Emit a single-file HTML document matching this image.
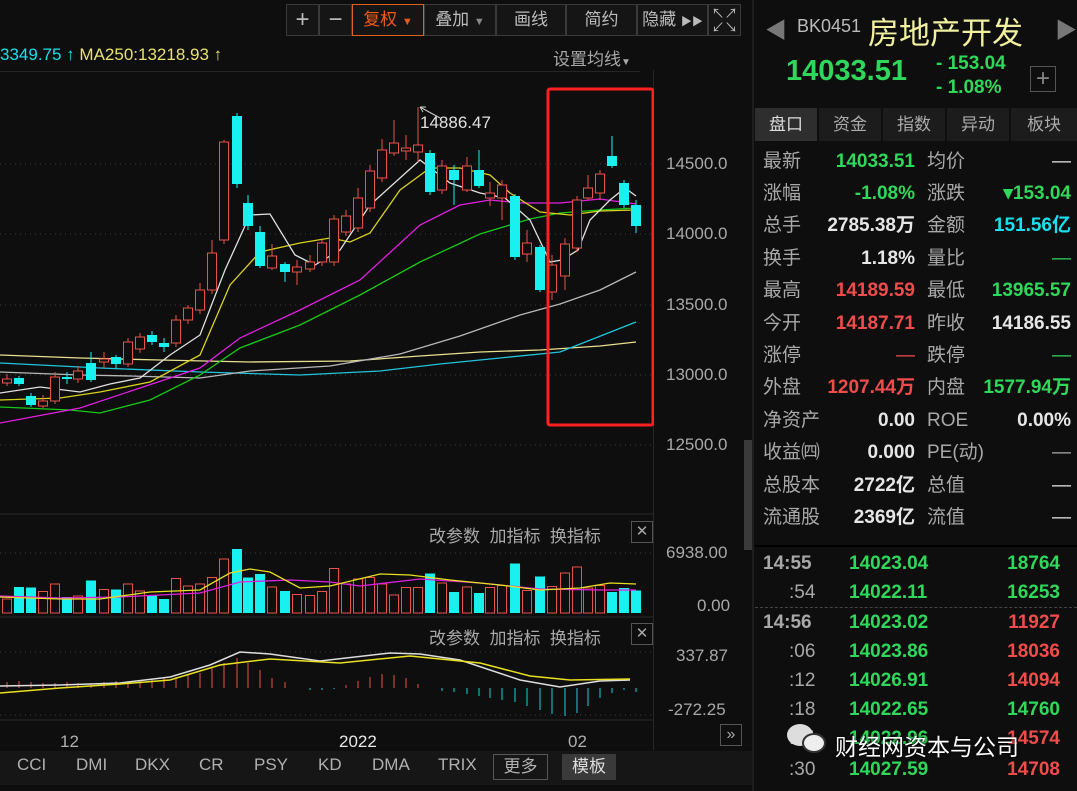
<!DOCTYPE html>
<html><head><meta charset="utf-8"><style>
*{margin:0;padding:0;box-sizing:border-box}
body{width:1077px;height:791px;background:#0e0e0e;overflow:hidden;position:relative;font-family:"Liberation Sans","Noto Sans CJK SC",sans-serif;color:#c8c8c8}
.a{position:absolute;white-space:nowrap}
.btn{position:absolute;top:4px;height:32px;border:1px solid #3a3a3a;background:#151515;color:#bbb;font-size:17px;line-height:30px;text-align:center}
.g{color:#2fd85a}.r{color:#f14c4c}.c{color:#19e0ee}.w{color:#e6e6e6}.l{color:#a8a8a8}
.row{position:absolute;left:763px;width:308px;height:30px;font-size:19px;line-height:30px}
.row span{position:absolute}
.tab{position:absolute;top:108px;height:33px;background:#1c1c1c;color:#aaa;font-size:17px;line-height:33px;text-align:center}
.t{position:absolute;left:763px;width:297px;font-size:19px;font-weight:bold;line-height:28px}
.t span{position:absolute}
.bt{position:absolute;top:755px;font-size:17px;color:#b0b0b0}
</style></head><body>
<div class="btn" style="left:286px;width:33px;font-size:24px">+</div>
<div class="btn" style="left:319px;width:33px;font-size:24px">−</div>
<div class="btn" style="left:352px;width:72px;border-color:#e0621a;color:#ea5a1a">复权 <span style="font-size:11px">▼</span></div>
<div class="btn" style="left:424px;width:72px">叠加 <span style="font-size:11px;color:#888">▼</span></div>
<div class="btn" style="left:496px;width:70px">画线</div>
<div class="btn" style="left:566px;width:71px">简约</div>
<div class="btn" style="left:637px;width:71px">隐藏 <span style="font-size:11px">▶▶</span></div>
<div class="btn" style="left:708px;width:33px;font-size:13px;line-height:14px;padding-top:2px">↖↗<br>↙↘</div>
<div class="a" style="left:0;top:45px;font-size:17px"><span class="c">3349.75 ↑</span> <span style="color:#e8e070">MA250:13218.93 ↑</span></div>
<div class="a l" style="left:553px;top:45px;font-size:17px">设置均线<span style="font-size:10px">▼</span></div>
<div class="a" style="left:0;top:71px;width:640px;height:1px;background:#252525"></div>
<div class="a l" style="left:666px;top:154px;font-size:17px">14500.0</div>
<div class="a l" style="left:666px;top:224px;font-size:17px">14000.0</div>
<div class="a l" style="left:666px;top:295px;font-size:17px">13500.0</div>
<div class="a l" style="left:666px;top:365px;font-size:17px">13000.0</div>
<div class="a l" style="left:666px;top:435px;font-size:17px">12500.0</div>
<div class="a" style="left:653px;top:70px;width:1px;height:680px;background:#282828"></div>
<div class="a" style="left:744px;top:440px;width:8px;height:110px;background:#3a3a3a"></div>
<div class="a" style="left:752px;top:0;width:2px;height:791px;background:#1e1e1e"></div>
<svg class="a" style="left:0;top:0" width="654" height="791">
<g stroke="#3a3a3a" stroke-dasharray="1 4">
<line x1="0" y1="164" x2="654" y2="164"/><line x1="0" y1="234" x2="654" y2="234"/><line x1="0" y1="305" x2="654" y2="305"/><line x1="0" y1="375" x2="654" y2="375"/><line x1="0" y1="445" x2="654" y2="445"/>
<line x1="0" y1="553" x2="654" y2="553"/><line x1="0" y1="652" x2="654" y2="652"/><line x1="0" y1="715" x2="654" y2="715"/>
</g>
<line x1="0" y1="514" x2="654" y2="514" stroke="#2a2a2a"/><line x1="0" y1="617" x2="654" y2="617" stroke="#2a2a2a"/><line x1="0" y1="720" x2="654" y2="720" stroke="#2a2a2a"/>
<g fill="none" stroke-width="1.3">
<polyline stroke="#e8e090" points="0,355 80,358 160,360 250,362 350,361 420,356 480,352 540,350 600,346 636,342"/>
<polyline stroke="#21c4dc" points="0,363 100,368 200,372 300,375 380,371 440,364 500,358 560,352 636,322"/>
<polyline stroke="#b8b8b8" points="0,372 80,375 130,376 200,378 250,371 330,366 400,354 460,336 520,315 560,304 600,290 636,272"/>
<polyline stroke="#19c819" points="0,407 70,410 100,413 150,400 200,375 240,348 300,325 360,295 420,262 480,234 530,219 560,213 600,210 636,208"/>
<polyline stroke="#e020e0" points="0,423 80,408 140,388 200,368 240,338 300,310 360,280 420,225 460,205 490,200 520,203 560,203 600,199 636,204"/>
<polyline stroke="#d8d020" points="0,400 60,398 100,392 150,382 200,355 230,285 260,252 300,243 330,238 350,242 370,233 400,190 430,168 460,168 490,175 510,193 540,212 570,215 600,211 636,210"/>
<polyline stroke="#e0e0e0" points="0,393 40,387 80,392 110,384 140,378 170,355 200,335 225,270 250,215 270,214 295,255 315,265 340,250 370,205 400,178 420,160 450,183 480,193 505,198 530,220 550,262 562,260 578,250 590,220 610,200 625,188 636,196"/>
</g>
<g id="cd"></g>
<text x="420" y="128" fill="#e0e0e0" font-size="17" font-family="Liberation Sans">  14886.47</text>
<path d="M420,107 L440,118" stroke="#ccc" fill="none"/><path d="M420,107 l6,0 M420,107 l3,5" stroke="#ccc"/>
<rect x="548" y="89" width="105" height="336" fill="none" stroke="#ff2020" stroke-width="3" rx="2"/>
<text x="339" y="747" fill="#e8e8e8" font-size="17" font-family="Liberation Sans">2022</text>
<text x="60" y="747" fill="#b0b0b0" font-size="17" font-family="Liberation Sans">12</text>
<text x="568" y="747" fill="#b0b0b0" font-size="17" font-family="Liberation Sans">02</text>
</svg>
<div class="a l" style="left:429px;top:522px;font-size:17px">改参数 &nbsp;加指标 &nbsp;换指标</div>
<div class="a l" style="left:631px;top:521px;width:22px;height:22px;border:1px solid #555;text-align:center;font-size:15px;line-height:20px">✕</div>
<div class="a l" style="left:429px;top:624px;font-size:17px">改参数 &nbsp;加指标 &nbsp;换指标</div>
<div class="a l" style="left:631px;top:623px;width:22px;height:22px;border:1px solid #555;text-align:center;font-size:15px;line-height:20px">✕</div>
<div class="a l" style="left:666px;top:543px;font-size:17px">6938.00</div>
<div class="a l" style="left:697px;top:596px;font-size:17px">0.00</div>
<div class="a l" style="left:676px;top:646px;font-size:17px">337.87</div>
<div class="a l" style="left:668px;top:700px;font-size:17px">-272.25</div>
<div class="a l" style="left:720px;top:724px;width:22px;height:22px;border:1px solid #555;text-align:center;font-size:16px;line-height:20px">»</div>
<div class="a" style="left:0;top:751px;width:752px;height:34px;background:#161616"></div>
<div class="bt" style="left:17px">CCI</div><div class="bt" style="left:76px">DMI</div><div class="bt" style="left:135px">DKX</div><div class="bt" style="left:199px">CR</div><div class="bt" style="left:254px">PSY</div><div class="bt" style="left:318px">KD</div><div class="bt" style="left:372px">DMA</div><div class="bt" style="left:438px">TRIX</div>
<div class="a" style="left:493px;top:754px;width:55px;height:26px;border:1px solid #555;text-align:center;font-size:17px;line-height:24px;color:#b0b0b0">更多</div>
<div class="a" style="left:562px;top:754px;width:54px;height:26px;background:#3a3a3a;text-align:center;font-size:17px;line-height:26px;color:#ddd">模板</div>
<div class="a" style="left:765px;top:13px;font-size:22px;color:#777">◀</div>
<div class="a" style="left:1055px;top:13px;font-size:22px;color:#777">▶</div>
<div class="a" style="left:797px;top:16px;font-size:18px;color:#bbb">BK0451</div>
<div class="a" style="left:868px;top:8px;font-size:31px;color:#f0f0a0">房地产开发</div>
<div class="a g" style="left:786px;top:55px;font-size:29px;font-weight:bold">14033.51</div>
<div class="a g" style="left:936px;top:53px;font-size:19px;font-weight:bold">- 153.04</div>
<div class="a g" style="left:936px;top:77px;font-size:19px;font-weight:bold">- 1.08%</div>
<div class="a" style="left:1030px;top:66px;width:26px;height:26px;border:1px solid #555;color:#888;text-align:center;font-size:24px;line-height:24px">+</div>
<div class="tab" style="left:755px;width:62px;background:#2e2e2e;color:#ddd">盘口</div>
<div class="tab" style="left:819px;width:62px">资金</div>
<div class="tab" style="left:883px;width:62px">指数</div>
<div class="tab" style="left:947px;width:62px">异动</div>
<div class="tab" style="left:1011px;width:66px">板块</div>
<div class="row" style="top:147px"><span class="l">最新</span><span class="g" style="right:156px;font-weight:bold">14033.51</span><span class="l" style="left:164px">均价</span><span class="w" style="right:0">—</span></div>
<div class="row" style="top:179px"><span class="l">涨幅</span><span class="g" style="right:156px;font-weight:bold">-1.08%</span><span class="l" style="left:164px">涨跌</span><span class="g" style="right:0;font-weight:bold">▾153.04</span></div>
<div class="row" style="top:211px"><span class="l">总手</span><span class="w" style="right:156px;font-weight:bold">2785.38万</span><span class="l" style="left:164px">金额</span><span class="c" style="right:0;font-weight:bold">151.56亿</span></div>
<div class="row" style="top:244px"><span class="l">换手</span><span class="w" style="right:156px;font-weight:bold">1.18%</span><span class="l" style="left:164px">量比</span><span class="g" style="right:0">—</span></div>
<div class="row" style="top:276px"><span class="l">最高</span><span class="r" style="right:156px;font-weight:bold">14189.59</span><span class="l" style="left:164px">最低</span><span class="g" style="right:0;font-weight:bold">13965.57</span></div>
<div class="row" style="top:309px"><span class="l">今开</span><span class="r" style="right:156px;font-weight:bold">14187.71</span><span class="l" style="left:164px">昨收</span><span class="w" style="right:0;font-weight:bold">14186.55</span></div>
<div class="row" style="top:341px"><span class="l">涨停</span><span class="r" style="right:156px">—</span><span class="l" style="left:164px">跌停</span><span class="g" style="right:0">—</span></div>
<div class="row" style="top:373px"><span class="l">外盘</span><span class="r" style="right:156px;font-weight:bold">1207.44万</span><span class="l" style="left:164px">内盘</span><span class="g" style="right:0;font-weight:bold">1577.94万</span></div>
<div class="row" style="top:406px"><span class="l">净资产</span><span class="w" style="right:156px;font-weight:bold">0.00</span><span class="l" style="left:164px">ROE</span><span class="w" style="right:0;font-weight:bold">0.00%</span></div>
<div class="row" style="top:438px"><span class="l">收益㈣</span><span class="w" style="right:156px;font-weight:bold">0.000</span><span class="l" style="left:164px">PE(动)</span><span class="l" style="right:0">—</span></div>
<div class="row" style="top:471px"><span class="l">总股本</span><span class="w" style="right:156px;font-weight:bold">2722亿</span><span class="l" style="left:164px">总值</span><span class="w" style="right:0">—</span></div>
<div class="row" style="top:503px"><span class="l">流通股</span><span class="w" style="right:156px;font-weight:bold">2369亿</span><span class="l" style="left:164px">流值</span><span class="w" style="right:0">—</span></div>
<div class="a" style="left:755px;top:545px;width:322px;height:2px;background:#000"></div>
<div class="a" style="left:755px;top:607px;width:322px;border-top:1px dashed #444"></div>
<div class="t" style="top:550px"><span class="l">14:55</span><span class="g" style="left:86px">14023.04</span><span class="g" style="right:0">18764</span></div>
<div class="t" style="top:579px"><span class="l" style="left:26px;font-weight:normal">:54</span><span class="g" style="left:86px">14022.11</span><span class="g" style="right:0">16253</span></div>
<div class="t" style="top:609px"><span class="l">14:56</span><span class="g" style="left:86px">14023.02</span><span class="r" style="right:0">11927</span></div>
<div class="t" style="top:638px"><span class="l" style="left:26px;font-weight:normal">:06</span><span class="g" style="left:86px">14023.86</span><span class="r" style="right:0">18036</span></div>
<div class="t" style="top:667px"><span class="l" style="left:26px;font-weight:normal">:12</span><span class="g" style="left:86px">14026.91</span><span class="r" style="right:0">14094</span></div>
<div class="t" style="top:696px"><span class="l" style="left:26px;font-weight:normal">:18</span><span class="g" style="left:86px">14022.65</span><span class="g" style="right:0">14760</span></div>
<div class="t" style="top:725px"><span class="l" style="left:26px;font-weight:normal">:24</span><span class="g" style="left:86px">14022.96</span><span class="r" style="right:0">14574</span></div>
<div class="t" style="top:756px"><span class="l" style="left:26px;font-weight:normal">:30</span><span class="g" style="left:86px">14027.59</span><span class="r" style="right:0">14708</span></div>
<div class="a" style="left:787px;top:724px;width:26px;height:22px;border-radius:50%;background:#ddd"></div>
<div class="a" style="left:802px;top:733px;width:24px;height:20px;border-radius:50%;background:#eee;border:2px solid #333"></div>
<div class="a" style="left:835px;top:728px;font-size:23px;color:#fff;text-shadow:0 0 3px #000">财经网资本与公司</div>
<script>
var C=[[7,'r',379,383,374,386],[19,'c',378,384,376,386],[31,'c',396,405,393,407],[43,'r',401,406,395,408],[55,'r',377,401,372,404],[67,'c',377,379,372,384],[78,'r',371,379,366,383],[91,'c',363,380,352,382],[104,'r',359,362,352,368],[116,'c',357,364,355,368],[128,'r',342,364,338,367],[140,'r',337,349,333,353],[152,'c',335,342,331,345],[164,'c',343,347,338,352],[176,'r',320,343,315,347],[188,'r',308,320,305,324],[200,'r',290,310,283,314],[212,'r',253,290,240,294],[224,'r',142,240,140,244],[237,'c',116,184,113,188],[248,'c',203,226,195,230],[260,'c',232,266,226,268],[272,'r',256,268,244,270],[285,'c',264,272,262,282],[297,'r',267,272,260,285],[310,'r',262,269,255,272],[322,'r',243,262,240,266],[334,'r',219,262,215,266],[346,'r',216,232,210,236],[358,'r',198,228,188,232],[370,'r',171,208,165,212],[382,'r',150,178,139,182],[394,'r',143,153,120,156],[406,'r',148,151,135,160],[418,'r',145,152,107,162],[430,'c',153,192,150,195],[442,'r',166,190,160,194],[454,'c',170,180,165,205],[467,'r',166,190,157,192],[479,'c',170,186,150,188],[490,'r',193,198,182,206],[502,'r',185,198,180,220],[515,'c',196,257,194,260],[527,'r',243,254,230,262],[540,'c',247,290,245,292],[552,'r',265,292,255,300],[565,'r',244,276,238,290],[577,'r',200,248,196,252],[588,'r',188,198,175,200],[600,'r',174,193,170,200],[612,'c',156,166,136,168],[624,'c',183,205,180,208],[636,'c',205,226,200,233]];
var s='',v='',m='';
C.forEach(function(c,i){var col=c[1]=='r'?'#e8524a':'#19f0f0';
s+='<line x1="'+c[0]+'" y1="'+c[4]+'" x2="'+c[0]+'" y2="'+c[5]+'" stroke="'+col+'"/>';
if(c[1]=='r')s+='<rect x="'+(c[0]-4.5)+'" y="'+c[2]+'" width="9" height="'+Math.max(1,c[3]-c[2])+'" fill="#0e0e0e" stroke="'+col+'"/>';
else s+='<rect x="'+(c[0]-5)+'" y="'+c[2]+'" width="10" height="'+Math.max(2,c[3]-c[2])+'" fill="'+col+'"/>';
var h=Math.min(64,12+Math.abs(c[3]-c[2])*0.5+((i*37)%13));if(i==19)h=64;if(i==18)h=54;
if(c[1]=='r')v+='<rect x="'+(c[0]-4.5)+'" y="'+(613-h)+'" width="9" height="'+h+'" fill="none" stroke="#e8524a"/>';
else v+='<rect x="'+(c[0]-5)+'" y="'+(613-h)+'" width="10" height="'+h+'" fill="#19f0f0"/>';
var d=[6,7,6,5,5,6,5,5,6,7,7,8,9,10,11,13,15,20,25,30,25,18,10,6,0,-2,-2,-1,3,7,11,14,13,10,4,0,-3,-4,-6,-8,-10,-12,-14,-18,-22,-26,-28,-25,-18,-10,-5,-2,-4][i]||0;
m+='<line x1="'+c[0]+'" y1="688" x2="'+c[0]+'" y2="'+(688-d*1.0)+'" stroke="'+(d>0?'#e8524a':'#19d0e0')+'"/>';});
s+='<g>'+v+'</g><polyline fill="none" stroke="#e020e0" stroke-width="1.3" points="0,596 60,598 120,597 200,593 240,582 290,580 330,582 360,586 420,579 480,583 540,589 600,590 636,590"/><polyline fill="none" stroke="#e8e020" stroke-width="1.3" points="0,597 60,599 100,599 150,592 200,590 230,573 250,569 270,572 300,588 330,586 380,574 410,575 450,580 500,585 540,590 580,588 610,583 636,584"/>'+m+'<polyline fill="none" stroke="#ddd" stroke-width="1.5" points="0,686 60,685 120,683 170,677 210,665 240,652 270,654 320,661 390,653 420,654 460,660 520,680 560,687 600,681 630,680"/><polyline fill="none" stroke="#e8e020" stroke-width="1.5" points="0,693 60,688 120,684 170,680 220,665 270,659 340,663 410,656 480,663 530,676 570,680 630,679"/>';
document.getElementById('cd').innerHTML=s;
</script>
</body></html>
